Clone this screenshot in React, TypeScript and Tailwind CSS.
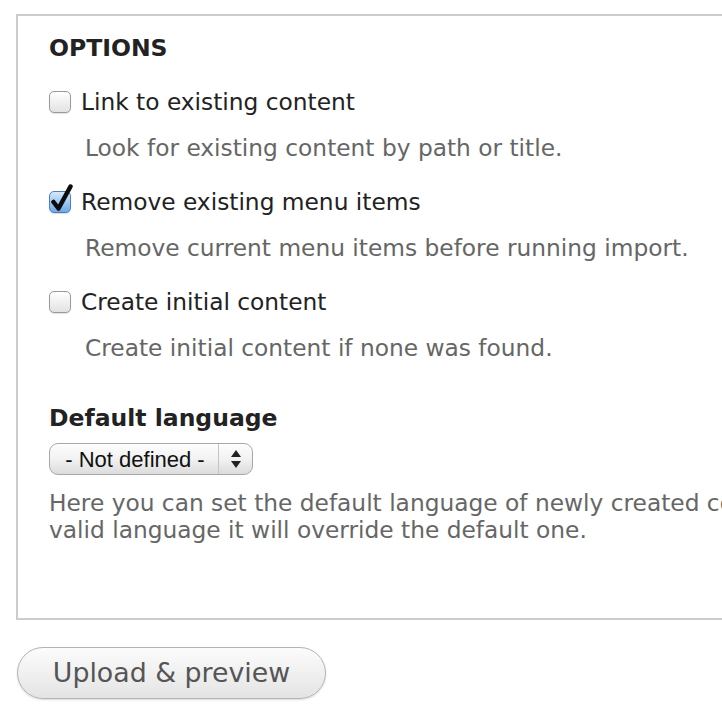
import React from "react";

const FONT = { fontFamily: '"DejaVu Sans", Verdana, sans-serif' };

function Box({ checked }: { checked?: boolean }) {
  if (checked)
    return (
      <span className="relative block h-[22px] w-[22px] shrink-0 rounded-[5px] border border-[#4a7fc0] bg-gradient-to-b from-[#d4e8fb] to-[#6eaae9] shadow-[0_1px_1px_rgba(0,0,0,0.15)]">
        <svg className="absolute -left-[1px] -top-[8px]" width="26" height="30" viewBox="0 0 26 30">
          <path d="M4.5 18 L9.5 24.5 L21.5 2.5" fill="none" stroke="#0c0c0c" strokeWidth="4.5" strokeLinecap="round" strokeLinejoin="round" />
        </svg>
      </span>
    );
  return (
    <span className="block h-[22px] w-[22px] shrink-0 rounded-[5px] border border-[#9a9a9a] bg-gradient-to-b from-[#ffffff] to-[#e2e2e2] shadow-[0_1px_1px_rgba(0,0,0,0.12)]" />
  );
}

function Option({ label, desc, checked }: { label: string; desc: string; checked?: boolean }) {
  return (
    <div className="mb-[26px]">
      <div className="flex h-[28px] items-center">
        <Box checked={checked} />
        <span className="ml-[10px] text-[23.3px] text-[#222]">{label}</span>
      </div>
      <div className="mt-[18px] pl-[36px] text-[23.3px] leading-[28px] text-[#666]">{desc}</div>
    </div>
  );
}

export default function App() {
  return (
    <div className="h-[716px] w-[722px] overflow-hidden bg-white" style={FONT}>
      <div className="ml-[16px] mt-[14px] h-[606px] w-[1200px] border-2 border-[#cccccc] pl-[31px] pt-[18px]">
        <h2 className="text-[23.5px] font-bold leading-[28px] text-[#222]">OPTIONS</h2>
        <div className="mt-[26px]">
          <Option label="Link to existing content" desc="Look for existing content by path or title." />
          <Option checked label="Remove existing menu items" desc="Remove current menu items before running import." />
          <Option label="Create initial content" desc="Create initial content if none was found." />
        </div>
        <h3 className="mt-[41px] text-[23.5px] font-bold leading-[30px] text-[#222]">Default language</h3>
        <div className="mt-[10px] flex h-[32px] w-[204px] items-center rounded-[9px] border border-[#a8a8a8] bg-gradient-to-b from-[#fdfdfd] via-[#f2f2f2] to-[#dcdcdc] shadow-[inset_0_1px_0_#fff]">
          <span
            className="flex-1 pl-[2px] text-center text-[22px] text-[#111]"
            style={{ fontFamily: '"Liberation Sans", Arial, sans-serif' }}
          >
            - Not defined -
          </span>
          <span className="flex h-full w-[34px] items-center justify-center border-l border-[#c4c4c4]">
            <svg width="12" height="22" viewBox="0 0 12 22">
              <path d="M6 2 L11 9 L1 9 Z" fill="#222" />
              <path d="M6 20 L11 13 L1 13 Z" fill="#222" />
            </svg>
          </span>
        </div>
        <p className="mt-[14px] whitespace-nowrap text-[23.3px] leading-[27px] text-[#666]">
          Here you can set the default language of newly created content. If the source provides a
          <br />
          valid language it will override the default one.
        </p>
      </div>
      <button
        type="button"
        className="ml-[17px] mt-[27px] flex h-[52px] w-[309px] items-center justify-center rounded-full border border-[#b4b4b4] bg-gradient-to-b from-[#fcfcfc] to-[#e4e4e4] text-[26.8px] text-[#555] shadow-[0_1px_2px_rgba(0,0,0,0.15)]"
        style={FONT}
      >
        Upload &amp; preview
      </button>
    </div>
  );
}
